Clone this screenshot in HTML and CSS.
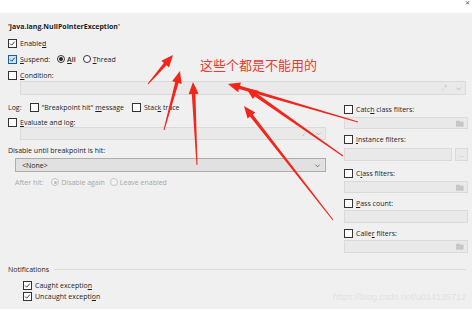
FILE: index.html
```html
<!DOCTYPE html>
<html>
<head>
  <title>Breakpoint Properties</title>
  <link rel="stylesheet" href="styles.css">
</head>
<body>
  <div class="topbar"><span class="close">&#x2715;</span></div>

  <div class="panel">
    <div class="row title">'java.lang.NullPointerException'</div>
    <div class="row r-enabled">
      <span class="cb on"><svg viewBox="0 0 8 8"><path d="M1.3 4.1 L3.1 5.9 L6.6 1.9"/></svg></span><span>Enable<u>d</u></span>
    </div>
    <div class="row r-suspend">
      <span class="cb on hot"><svg viewBox="0 0 8 8"><path d="M1.3 4.1 L3.1 5.9 L6.6 1.9"/></svg></span><span><u>S</u>uspend:</span>
      <span class="rb on"></span><b><u>A</u>ll</b>
      <span class="rb"></span><span><u>T</u>hread</span>
    </div>
    <div class="row r-cond"><span class="cb"></span><span><u>C</u>ondition:</span></div>
    <div class="field cond-field">
      <svg class="ico-expand" viewBox="0 0 8 8"><path d="M1 7 L3 5 M5 3 L7 1 M5 1 H7 V3"/></svg>
      <svg class="ico-chev" viewBox="0 0 8 8"><path d="M1.5 3 L4 5.5 L6.5 3"/></svg>
    </div>

    <div class="split">
      <div class="left">
        <div class="row r-log">
          <span class="log-label">Log:</span>
          <span class="cb"></span><span>"Breakpoint hit" <u>m</u>essage</span>
          <span class="cb gap"></span><span>Stac<u>k</u> trace</span>
        </div>
        <div class="row r-eval"><span class="cb"></span><span><u>E</u>valuate and log:</span></div>
        <div class="field eval-field">
          <svg class="ico-small" viewBox="0 0 8 8"><path d="M2 6 L6 2 M2 6 H4"/></svg>
          <svg class="ico-chev" viewBox="0 0 8 8"><path d="M1.5 3 L4 5.5 L6.5 3"/></svg>
        </div>
        <div class="row r-disable">Disable until breakpoint is hit:</div>
        <div class="select">
          <span>&lt;None&gt;</span>
          <svg class="ico-chev dark" viewBox="0 0 8 8"><path d="M1.5 3 L4 5.5 L6.5 3"/></svg>
        </div>
        <div class="row r-after">
          <span class="after-label">After hit:</span>
          <span class="rb off on"></span><span>Disable again</span>
          <span class="rb off gap"></span><span>Leave enabled</span>
        </div>
      </div>

      <div class="right">
        <div class="row r-catch"><span class="cb"></span><span>Catc<u>h</u> class filters:</span></div>
        <div class="field rfield"><svg class="folder" viewBox="0 0 10 8"><path d="M0.5 1 H4 L5 2 H9 V7.5 H0.5 Z"/></svg></div>
        <div class="row r-inst"><span class="cb"></span><span><u>I</u>nstance filters:</span></div>
        <div class="inst-row">
          <div class="field inst-field"></div>
          <div class="dots">...</div>
        </div>
        <div class="row r-class"><span class="cb"></span><span>C<u>l</u>ass filters:</span></div>
        <div class="field rfield"><svg class="folder" viewBox="0 0 10 8"><path d="M0.5 1 H4 L5 2 H9 V7.5 H0.5 Z"/></svg></div>
        <div class="row r-pass"><span class="cb"></span><span><u>P</u>ass count:</span></div>
        <div class="field rfield tall"></div>
        <div class="row r-caller"><span class="cb"></span><span>Calle<u>r</u> filters:</span></div>
        <div class="field rfield tall"><svg class="folder" viewBox="0 0 10 8"><path d="M0.5 1 H4 L5 2 H9 V7.5 H0.5 Z"/></svg></div>
      </div>
    </div>

    <div class="notifications">
      <div class="row r-notif"><span>Notifications</span><span class="sep"></span></div>
      <div class="row r-caught">
        <span class="cb on"><svg viewBox="0 0 8 8"><path d="M1.3 4.1 L3.1 5.9 L6.6 1.9"/></svg></span><span>Caught exceptio<u>n</u></span>
      </div>
      <div class="row r-uncaught">
        <span class="cb on"><svg viewBox="0 0 8 8"><path d="M1.3 4.1 L3.1 5.9 L6.6 1.9"/></svg></span><span>Uncaught excepti<u>o</u>n</span>
      </div>
    </div>
  </div>

  <!-- annotation drawn over the dialog -->
  <div class="note">这些个都是不能用的</div>
  <svg class="arrows" viewBox="0 0 474 311">
    <polygon points="148.4,84.3 166.6,65.3 169,67.4 173,55 161.4,60.8 163.8,62.9 147.6,83.7"/>
    <polygon points="164.5,130.1 178.6,83.1 181.7,83.9 180,71 172.1,81.3 175.2,82.1 163.5,129.9"/>
    <polygon points="197.5,165 195.4,93.9 198.6,93.8 193,82 188.6,94.2 191.8,94.1 196.5,165"/>
    <polygon points="358.1,121.5 240,85.7 240.9,82.6 228,84 238.1,92.2 239,89.1 357.9,122.5"/>
    <polygon points="343.3,155.6 256.8,93.4 258.7,90.8 246,88 252.9,99 254.8,96.4 342.7,156.4"/>
    <polygon points="333.4,219.7 252.8,114.4 255.3,112.4 244,106 247.5,118.6 250,116.6 332.6,220.3"/>
  </svg>
  <div class="watermark">https://blog.csdn.net/u014135712</div>
</body>
</html>
```

FILE: styles.css
```css
* { box-sizing: border-box; }
body { margin: 0; width: 474px; height: 311px; background: #fff; font-family: "Open Sans", "Noto Sans", sans-serif; font-size: 7px; color: #1e1e1e; position: relative; overflow: hidden; }
u { text-decoration: underline; text-underline-offset: 1px; }
b { font-weight: 600; }

.topbar { height: 13px; display: flex; justify-content: flex-end; padding-right: 4px; }
.close { font-size: 6px; line-height: 7px; color: #555; }

.panel { background: #f0f0f0; height: 296px; margin-right: 2px; padding: 8px 4px 8px 8px; display: flex; flex-direction: column; }
.row { display: flex; align-items: center; height: 10px; white-space: nowrap; }
.title { font-weight: 700; }
.r-enabled { margin-top: 7px; }
.r-suspend { margin-top: 6px; }
.r-cond { margin-top: 6px; }

.cb { width: 9px; height: 9px; border: 1px solid #333; background: #fff; margin-right: 3px; flex: none; display: flex; }
.cb svg { width: 7px; height: 7px; fill: none; stroke: #222; stroke-width: 1; }
.cb.hot { background: #cce4f7; border-color: #1c5d99; }
.cb.gap { margin-left: 8px; }
.rb { width: 8px; height: 8px; border: 1px solid #333; border-radius: 50%; background: #fff; margin: 0 2px 0 7px; flex: none; display: flex; align-items: center; justify-content: center; }
.rb.on::after { content: ""; width: 4px; height: 4px; border-radius: 50%; background: #222; }
.rb.off { border-color: #c4c4c4; background: #f4f4f4; }
.rb.off.on::after { width: 3px; height: 3px; background: #bcbcbc; }
.rb.gap { margin-left: 5px; }

.field { background: #e9e9e9; border: 1px solid #dadada; display: flex; align-items: center; justify-content: flex-end; padding-right: 3px; gap: 8px; }
.cond-field { height: 14px; margin: 1px 2px 0 12px; }
.ico-expand, .ico-small { width: 6px; height: 6px; fill: none; stroke: #c2c2c2; stroke-width: 0.9; }
.ico-chev { width: 7px; height: 7px; fill: none; stroke: #b4b4b4; stroke-width: 1; }
.ico-chev.dark { stroke: #666; }

.split { display: grid; grid-template-columns: 318px 124px; column-gap: 18px; }
.left, .right { display: flex; flex-direction: column; }

.r-log { margin-top: 7px; }
.log-label { margin-right: 8px; }
.r-eval { margin-top: 5px; }
.eval-field { height: 13px; margin-left: 12px; }
.r-disable { margin-top: 5px; }
.select { height: 14px; margin: 3px 0 0 7px; background: #e1e1e1; border: 1px solid #adadad; display: flex; align-items: center; justify-content: space-between; padding: 0 4px 0 6px; }
.r-after { margin-top: 5px; padding-left: 7px; color: #a6a6a6; }
.after-label { margin-right: 1px; }

.right .cb { margin-right: 3px; }
.r-catch { margin-top: 9px; }
.rfield { height: 12px; margin-top: 3px; }
.rfield.tall { height: 13px; margin-top: 2px; }
.folder { width: 8px; height: 7px; fill: #c8c8c8; stroke: #b8b8b8; stroke-width: 0.6; }
.r-inst { margin-top: 5px; }
.inst-row { display: flex; gap: 3px; margin-top: 4px; height: 13px; }
.inst-field { flex: 1; }
.dots { width: 13px; background: #e9e9e9; border: 1px solid #dadada; color: #b0b0b0; font-size: 6px; display: flex; align-items: center; justify-content: center; }
.r-class { margin-top: 7px; }
.r-pass { margin-top: 5px; }
.r-caller { margin-top: 5px; }

.notifications { margin-top: auto; }
.sep { flex: 1; height: 1px; background: #dcdcdc; margin: 0 2px 0 5px; }
.r-caught { margin-top: 6px; padding-left: 15px; }
.r-uncaught { margin-top: 1px; padding-left: 15px; }

.note { position: absolute; left: 200px; top: 57px; font-family: "Noto Sans CJK SC", sans-serif; font-size: 13px; line-height: 16px; color: #ea3b33; }
.arrows { position: absolute; left: 0; top: 0; width: 474px; height: 311px; fill: #f2261b; pointer-events: none; }
.watermark { position: absolute; right: 8px; bottom: 9px; font-family: "Liberation Sans", sans-serif; font-size: 9px; color: #e2e2e2; }
```
